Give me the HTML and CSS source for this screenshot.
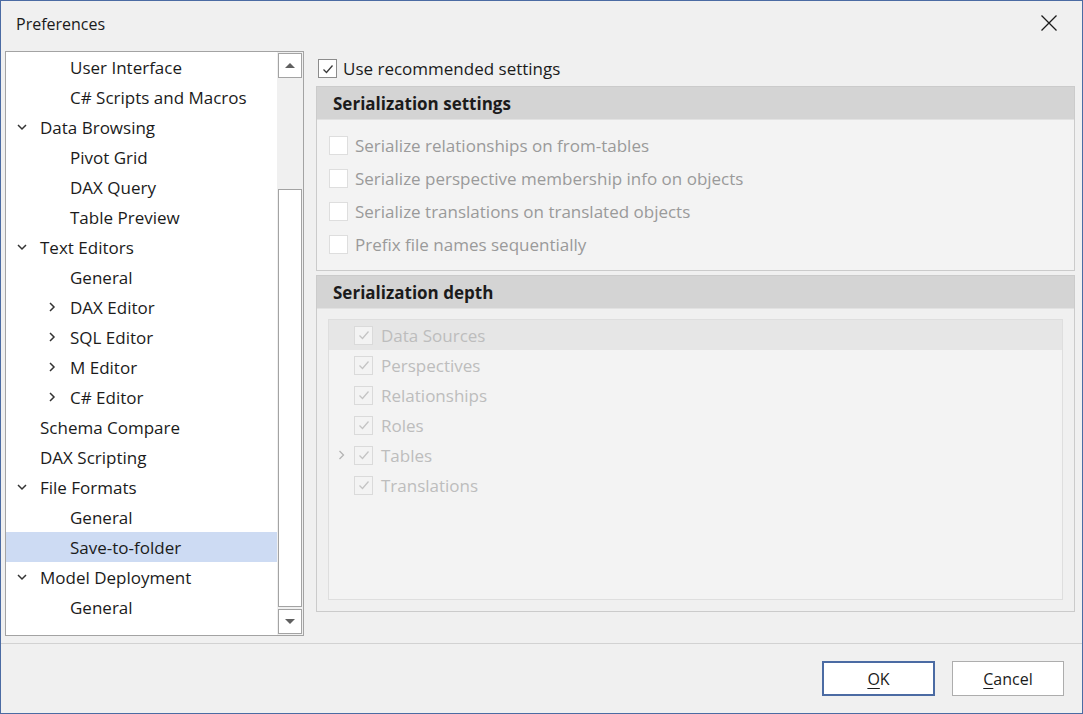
FILE: index.html
```html
<!DOCTYPE html>
<html>
<head>
<meta charset="utf-8">
<title>Preferences</title>
<link rel="stylesheet" href="styles.css">
</head>
<body>
<div class="window">
  <div class="titlebar">
    <div class="title">Preferences</div>
    <div class="close">
      <svg width="16" height="16" viewBox="0 0 16 16"><path d="M0.5 0.5 L15.5 15.5 M15.5 0.5 L0.5 15.5" stroke="#1a1a1a" stroke-width="1.3" fill="none"/></svg>
    </div>
  </div>
  <div class="main">
    <div class="tree">
      <div class="tree-list">
        <div class="row l2"><span class="exp"></span><span class="label">User Interface</span></div>
        <div class="row l2"><span class="exp"></span><span class="label">C# Scripts and Macros</span></div>
        <div class="row l1"><span class="exp"><svg class="chev" width="10" height="10" viewBox="0 0 10 10"><path d="M1 3 L5 7 L9 3" stroke="#333" stroke-width="1.5" fill="none"/></svg></span><span class="label">Data Browsing</span></div>
        <div class="row l2"><span class="exp"></span><span class="label">Pivot Grid</span></div>
        <div class="row l2"><span class="exp"></span><span class="label">DAX Query</span></div>
        <div class="row l2"><span class="exp"></span><span class="label">Table Preview</span></div>
        <div class="row l1"><span class="exp"><svg class="chev" width="10" height="10" viewBox="0 0 10 10"><path d="M1 3 L5 7 L9 3" stroke="#333" stroke-width="1.5" fill="none"/></svg></span><span class="label">Text Editors</span></div>
        <div class="row l2"><span class="exp"></span><span class="label">General</span></div>
        <div class="row l2"><span class="exp"><svg class="chev" width="10" height="10" viewBox="0 0 10 10"><path d="M3 1 L7 5 L3 9" stroke="#333" stroke-width="1.5" fill="none"/></svg></span><span class="label">DAX Editor</span></div>
        <div class="row l2"><span class="exp"><svg class="chev" width="10" height="10" viewBox="0 0 10 10"><path d="M3 1 L7 5 L3 9" stroke="#333" stroke-width="1.5" fill="none"/></svg></span><span class="label">SQL Editor</span></div>
        <div class="row l2"><span class="exp"><svg class="chev" width="10" height="10" viewBox="0 0 10 10"><path d="M3 1 L7 5 L3 9" stroke="#333" stroke-width="1.5" fill="none"/></svg></span><span class="label">M Editor</span></div>
        <div class="row l2"><span class="exp"><svg class="chev" width="10" height="10" viewBox="0 0 10 10"><path d="M3 1 L7 5 L3 9" stroke="#333" stroke-width="1.5" fill="none"/></svg></span><span class="label">C# Editor</span></div>
        <div class="row l1"><span class="exp"></span><span class="label">Schema Compare</span></div>
        <div class="row l1"><span class="exp"></span><span class="label">DAX Scripting</span></div>
        <div class="row l1"><span class="exp"><svg class="chev" width="10" height="10" viewBox="0 0 10 10"><path d="M1 3 L5 7 L9 3" stroke="#333" stroke-width="1.5" fill="none"/></svg></span><span class="label">File Formats</span></div>
        <div class="row l2"><span class="exp"></span><span class="label">General</span></div>
        <div class="row l2 selected"><span class="exp"></span><span class="label">Save-to-folder</span></div>
        <div class="row l1"><span class="exp"><svg class="chev" width="10" height="10" viewBox="0 0 10 10"><path d="M1 3 L5 7 L9 3" stroke="#333" stroke-width="1.5" fill="none"/></svg></span><span class="label">Model Deployment</span></div>
        <div class="row l2"><span class="exp"></span><span class="label">General</span></div>
      </div>
      <div class="scrollbar">
        <div class="sb-btn"><span class="tri-up"></span></div>
        <div class="sb-track"><div class="sb-thumb"></div></div>
        <div class="sb-btn"><span class="tri-down"></span></div>
      </div>
    </div>
    <div class="content">
      <div class="check-row">
        <span class="cb cb-on"><svg width="16" height="16" viewBox="0 0 16 16"><path d="M3.5 8.5 L6.5 11.5 L12.5 4.5" stroke="#3a3a3a" stroke-width="1.3" fill="none"/></svg></span>
        <span class="check-label">Use recommended settings</span>
      </div>
      <div class="group">
        <div class="group-header">Serialization settings</div>
        <div class="group-body settings">
          <div class="opt"><span class="cb cb-dis"></span><span class="opt-label">Serialize relationships on from-tables</span></div>
          <div class="opt"><span class="cb cb-dis"></span><span class="opt-label">Serialize perspective membership info on objects</span></div>
          <div class="opt"><span class="cb cb-dis"></span><span class="opt-label">Serialize translations on translated objects</span></div>
          <div class="opt"><span class="cb cb-dis"></span><span class="opt-label">Prefix file names sequentially</span></div>
        </div>
      </div>
      <div class="group group-depth">
        <div class="group-header">Serialization depth</div>
        <div class="group-body depth">
          <div class="depth-tree">
            <div class="drow first"><span class="dexp"></span><span class="cb cb-dis2"><svg width="16" height="16" viewBox="0 0 16 16"><path d="M3.5 8.5 L6.5 11.5 L12.5 4.5" stroke="#c4c4c4" stroke-width="1.3" fill="none"/></svg></span><span class="dlabel">Data Sources</span></div>
            <div class="drow"><span class="dexp"></span><span class="cb cb-dis2"><svg width="16" height="16" viewBox="0 0 16 16"><path d="M3.5 8.5 L6.5 11.5 L12.5 4.5" stroke="#c4c4c4" stroke-width="1.3" fill="none"/></svg></span><span class="dlabel">Perspectives</span></div>
            <div class="drow"><span class="dexp"></span><span class="cb cb-dis2"><svg width="16" height="16" viewBox="0 0 16 16"><path d="M3.5 8.5 L6.5 11.5 L12.5 4.5" stroke="#c4c4c4" stroke-width="1.3" fill="none"/></svg></span><span class="dlabel">Relationships</span></div>
            <div class="drow"><span class="dexp"></span><span class="cb cb-dis2"><svg width="16" height="16" viewBox="0 0 16 16"><path d="M3.5 8.5 L6.5 11.5 L12.5 4.5" stroke="#c4c4c4" stroke-width="1.3" fill="none"/></svg></span><span class="dlabel">Roles</span></div>
            <div class="drow"><span class="dexp"><svg width="8" height="10" viewBox="0 0 8 10"><path d="M1.5 1 L5.5 5 L1.5 9" stroke="#b4b4b4" stroke-width="1.3" fill="none"/></svg></span><span class="cb cb-dis2"><svg width="16" height="16" viewBox="0 0 16 16"><path d="M3.5 8.5 L6.5 11.5 L12.5 4.5" stroke="#c4c4c4" stroke-width="1.3" fill="none"/></svg></span><span class="dlabel">Tables</span></div>
            <div class="drow"><span class="dexp"></span><span class="cb cb-dis2"><svg width="16" height="16" viewBox="0 0 16 16"><path d="M3.5 8.5 L6.5 11.5 L12.5 4.5" stroke="#c4c4c4" stroke-width="1.3" fill="none"/></svg></span><span class="dlabel">Translations</span></div>
          </div>
        </div>
      </div>
    </div>
  </div>
  <div class="footer">
    <button class="btn btn-default"><u>O</u>K</button>
    <button class="btn"><u>C</u>ancel</button>
  </div>
</div>
</body>
</html>
```

FILE: styles.css
```css
* { box-sizing: border-box; }
html, body { margin: 0; padding: 0; }
body {
  font-family: "Open Sans", "Noto Sans", sans-serif;
  font-size: 17px;
  color: #1b1b1b;
  background: #f0f0f0;
}
.window {
  width: 1083px;
  height: 714px;
  border: 1px solid #4b6ba3;
  background: #f0f0f0;
  display: flex;
  flex-direction: column;
}
.titlebar {
  height: 50px;
  flex: none;
  display: flex;
  justify-content: space-between;
  align-items: flex-start;
}
.title {
  font-size: 16px;
  padding-left: 15px;
  padding-top: 12px;
  color: #1a1a1a;
}
.close {
  padding-top: 14px;
  padding-right: 25px;
  line-height: 0;
}
.main {
  height: 592px;
  flex: none;
  display: flex;
  padding: 0 7px 0 4px;
  gap: 12px;
}
.tree {
  width: 299px;
  height: 585px;
  border: 1px solid #a3a3a3;
  background: #fff;
  display: flex;
  flex: none;
}
.tree-list {
  width: 271px;
  flex: none;
  overflow: hidden;
}
.row {
  height: 30px;
  display: flex;
  align-items: center;
  white-space: nowrap;
}
.row.l1 { padding-left: 4px; }
.row.l2 { padding-left: 34px; }
.row.selected { background: #cddbf3; }
.exp {
  width: 30px;
  flex: none;
  display: flex;
  align-items: center;
  padding-left: 7px;
}
.chev { display: block; }
.scrollbar {
  width: 26px;
  flex: none;
  background: #f0f0f0;
  display: flex;
  flex-direction: column;
  padding: 1px 1px 1px 1px;
}
.sb-btn {
  height: 25px;
  flex: none;
  background: #fff;
  border: 1px solid #a3a3a3;
  display: flex;
  align-items: center;
  justify-content: center;
}
.sb-track {
  flex: 1;
  display: flex;
  flex-direction: column;
  justify-content: flex-end;
  padding: 0 0 2px 0;
}
.sb-thumb {
  height: 418px;
  background: #fff;
  border: 1px solid #a3a3a3;
}
.tri-up {
  width: 0; height: 0;
  border-left: 5px solid transparent;
  border-right: 5px solid transparent;
  border-bottom: 5px solid #606060;
}
.tri-down {
  width: 0; height: 0;
  border-left: 5px solid transparent;
  border-right: 5px solid transparent;
  border-top: 5px solid #606060;
}
.content {
  width: 759px;
  flex: none;
  display: flex;
  flex-direction: column;
}
.check-row {
  height: 35px;
  display: flex;
  align-items: center;
  padding-left: 2px;
}
.cb {
  width: 19px;
  height: 19px;
  flex: none;
  display: flex;
  align-items: center;
  justify-content: center;
}
.cb svg { display: block; }
.cb-on {
  border: 1px solid #8c8c8c;
  background: #fff;
}
.check-label {
  margin-left: 6px;
  color: #1b1b1b;
}
.group {
  border: 1px solid #cbcbcb;
  background: #f3f3f3;
}
.group-header {
  height: 33px;
  background: #d4d4d4;
  border-bottom: 1px solid #e2e2e2;
  font-weight: bold;
  display: flex;
  align-items: center;
  padding-left: 16px;
  color: #1b1b1b;
}
.settings {
  padding: 9px 0 7px 12px;
  height: 150px;
}
.opt {
  height: 33px;
  display: flex;
  align-items: center;
}
.cb-dis {
  border: 1px solid #dedede;
  background: #fff;
}
.opt-label {
  margin-left: 7px;
  color: #9a9a9a;
}
.group-depth {
  margin-top: 4px;
  height: 337px;
  background: #f0f0f0;
}
.depth {
  padding: 10px 11px 11px 11px;
  height: 302px;
}
.depth-tree {
  height: 100%;
  border: 1px solid #dedede;
  background: #f3f3f3;
}
.drow {
  height: 30px;
  display: flex;
  align-items: center;
  padding-left: 5px;
}
.drow.first { background: #e6e6e6; }
.dexp {
  width: 20px;
  flex: none;
  display: flex;
  align-items: center;
  padding-left: 4px;
}
.dexp svg { display: block; }
.cb-dis2 {
  border: 1px solid #dadada;
  background: #f3f3f3;
}
.dlabel {
  margin-left: 8px;
  color: #bdbdbd;
}
.footer {
  flex: 1;
  border-top: 1px solid #d2d2d2;
  display: flex;
  justify-content: flex-end;
  align-items: flex-start;
  padding: 17px 18px 0 0;
  gap: 17px;
}
.btn {
  font-family: "Open Sans", "Noto Sans", sans-serif;
  font-size: 16px;
  color: #1b1b1b;
  height: 35px;
  width: 112px;
  background: #fff;
  border: 1px solid #adadad;
  padding: 0;
  margin: 0;
}
.btn-default {
  width: 113px;
  border: 2px solid #4b6ba3;
}
.btn u { text-decoration-thickness: 1px; text-underline-offset: 3px; }
```
